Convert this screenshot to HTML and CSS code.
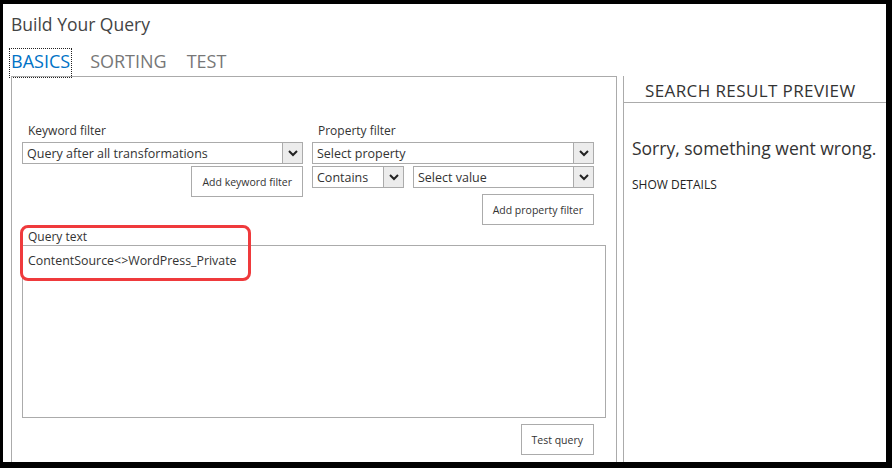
FILE: index.html
```html
<!DOCTYPE html>
<html lang="en">
<head>
    <meta charset="UTF-8">
    <title>Build Your Query</title>
    <link rel="stylesheet" href="styles.css">
</head>
<body>
    <div class="frame">
        <h1 class="title">Build Your Query</h1>
        <div class="tabs">
            <span class="tab active">BASICS</span>
            <span class="tab">SORTING</span>
            <span class="tab">TEST</span>
        </div>
        <div class="panes">
            <div class="pane-left">
                <div class="filters">
                    <div class="filter keyword">
                        <div class="label">Keyword filter</div>
                        <div class="select wide">
                            <span class="select-text">Query after all transformations</span>
                            <span class="arrow"><svg width="10" height="7" viewBox="0 0 10 7"><path d="M1 1l4 4 4-4" fill="none" stroke="#222" stroke-width="2"/></svg></span>
                        </div>
                        <div class="btn-row"><button class="btn">Add keyword filter</button></div>
                    </div>
                    <div class="filter property">
                        <div class="label">Property filter</div>
                        <div class="select wide">
                            <span class="select-text">Select property</span>
                            <span class="arrow"><svg width="10" height="7" viewBox="0 0 10 7"><path d="M1 1l4 4 4-4" fill="none" stroke="#222" stroke-width="2"/></svg></span>
                        </div>
                        <div class="select-row">
                            <div class="select small">
                                <span class="select-text">Contains</span>
                                <span class="arrow"><svg width="10" height="7" viewBox="0 0 10 7"><path d="M1 1l4 4 4-4" fill="none" stroke="#222" stroke-width="2"/></svg></span>
                            </div>
                            <div class="select grow">
                                <span class="select-text">Select value</span>
                                <span class="arrow"><svg width="10" height="7" viewBox="0 0 10 7"><path d="M1 1l4 4 4-4" fill="none" stroke="#222" stroke-width="2"/></svg></span>
                            </div>
                        </div>
                        <div class="btn-row spaced"><button class="btn">Add property filter</button></div>
                    </div>
                </div>
                <div class="query">
                    <div class="label flush">Query text</div>
                    <div class="textarea">ContentSource&lt;&gt;WordPress_Private</div>
                    <div class="highlight"></div>
                    <div class="btn-row test"><button class="btn">Test query</button></div>
                </div>
            </div>
            <div class="pane-right">
                <div class="preview-head">SEARCH RESULT PREVIEW</div>
                <div class="preview-body">
                    <p class="error">Sorry, something went wrong.</p>
                    <p class="details">SHOW DETAILS</p>
                </div>
            </div>
        </div>
    </div>
</body>
</html>
```

FILE: styles.css
```css
body {
    margin: 0;
    background-color: #000;
    font-family: "Open Sans", "Noto Sans", sans-serif;
    color: #444;
    overflow: hidden;
}

.frame {
    margin: 4px 6px 6px 3px;
    height: 458px;
    background-color: #fff;
    display: flex;
    flex-direction: column;
    overflow: hidden;
}

.title {
    margin: 9px 0 0 8px;
    font-size: 17.5px;
    font-weight: normal;
    line-height: 22px;
    color: #444;
}

.tabs {
    display: flex;
    gap: 20px;
    margin: 15px 0 0 8px;
    height: 26px;
}

.tab {
    font-size: 18px;
    line-height: 22px;
    color: #777;
}

.tab.active {
    color: #0072c6;
    outline: 1px dotted #222;
    outline-offset: 1px;
}

.panes {
    display: flex;
    flex: 1;
    gap: 6px;
    margin-left: 8px;
}

.pane-left {
    width: 606px;
    border: 1px solid #ababab;
    border-bottom: none;
    padding: 46px 10px 0 10px;
    box-sizing: border-box;
}

.filters {
    display: flex;
    gap: 9px;
}

.filter.keyword {
    width: 281px;
}

.filter.property {
    width: 282px;
}

.label {
    font-size: 12px;
    line-height: 16px;
    color: #333;
    padding-left: 6px;
    margin-bottom: 3px;
}

.label.flush {
    margin-bottom: 0;
}

.select {
    display: flex;
    height: 22px;
    border: 1px solid #ababab;
    box-sizing: border-box;
    font-size: 12.5px;
    color: #333;
}

.select-text {
    flex: 1;
    padding-left: 4px;
    line-height: 21px;
    white-space: nowrap;
    overflow: hidden;
}

.arrow {
    width: 19px;
    background-color: #ececec;
    border-left: 1px solid #ababab;
    display: flex;
    align-items: center;
    justify-content: center;
}

.select-row {
    display: flex;
    gap: 9px;
    margin-top: 2px;
}

.select.small {
    width: 92px;
}

.select.grow {
    flex: 1;
}

.btn-row {
    display: flex;
    justify-content: flex-end;
    margin-top: 2px;
}

.btn-row.spaced {
    margin-top: 6px;
}

.btn {
    font-family: "Open Sans", "Noto Sans", sans-serif;
    font-size: 10.5px;
    color: #333;
    background-color: #fff;
    border: 1px solid #ababab;
    height: 31px;
    padding: 0 10px;
}

.query {
    position: relative;
    margin-top: 4px;
}

.textarea {
    height: 173px;
    border: 1px solid #ababab;
    box-sizing: border-box;
    padding: 5px 5px;
    font-size: 12.4px;
    line-height: 20px;
    color: #333;
}

.btn-row.test {
    margin-top: 6px;
    padding-right: 12px;
}

.highlight {
    position: absolute;
    left: -2px;
    top: -4px;
    width: 231px;
    height: 56px;
    border: 3px solid #ef3a3c;
    border-radius: 8px;
    box-sizing: border-box;
}

.pane-right {
    flex: 1;
    border-left: 1px solid #ababab;
}

.preview-head {
    height: 26px;
    border-bottom: 1px solid #ababab;
    font-size: 17px;
    line-height: 30px;
    color: #333;
    padding-left: 21px;
    white-space: nowrap;
    letter-spacing: 0.4px;
}

.preview-body {
    padding: 33px 0 0 8px;
}

.error {
    margin: 0;
    font-size: 17.5px;
    line-height: 24px;
    color: #333;
    white-space: nowrap;
}

.details {
    margin: 16px 0 0 0;
    font-size: 12px;
    color: #222;
}
```
